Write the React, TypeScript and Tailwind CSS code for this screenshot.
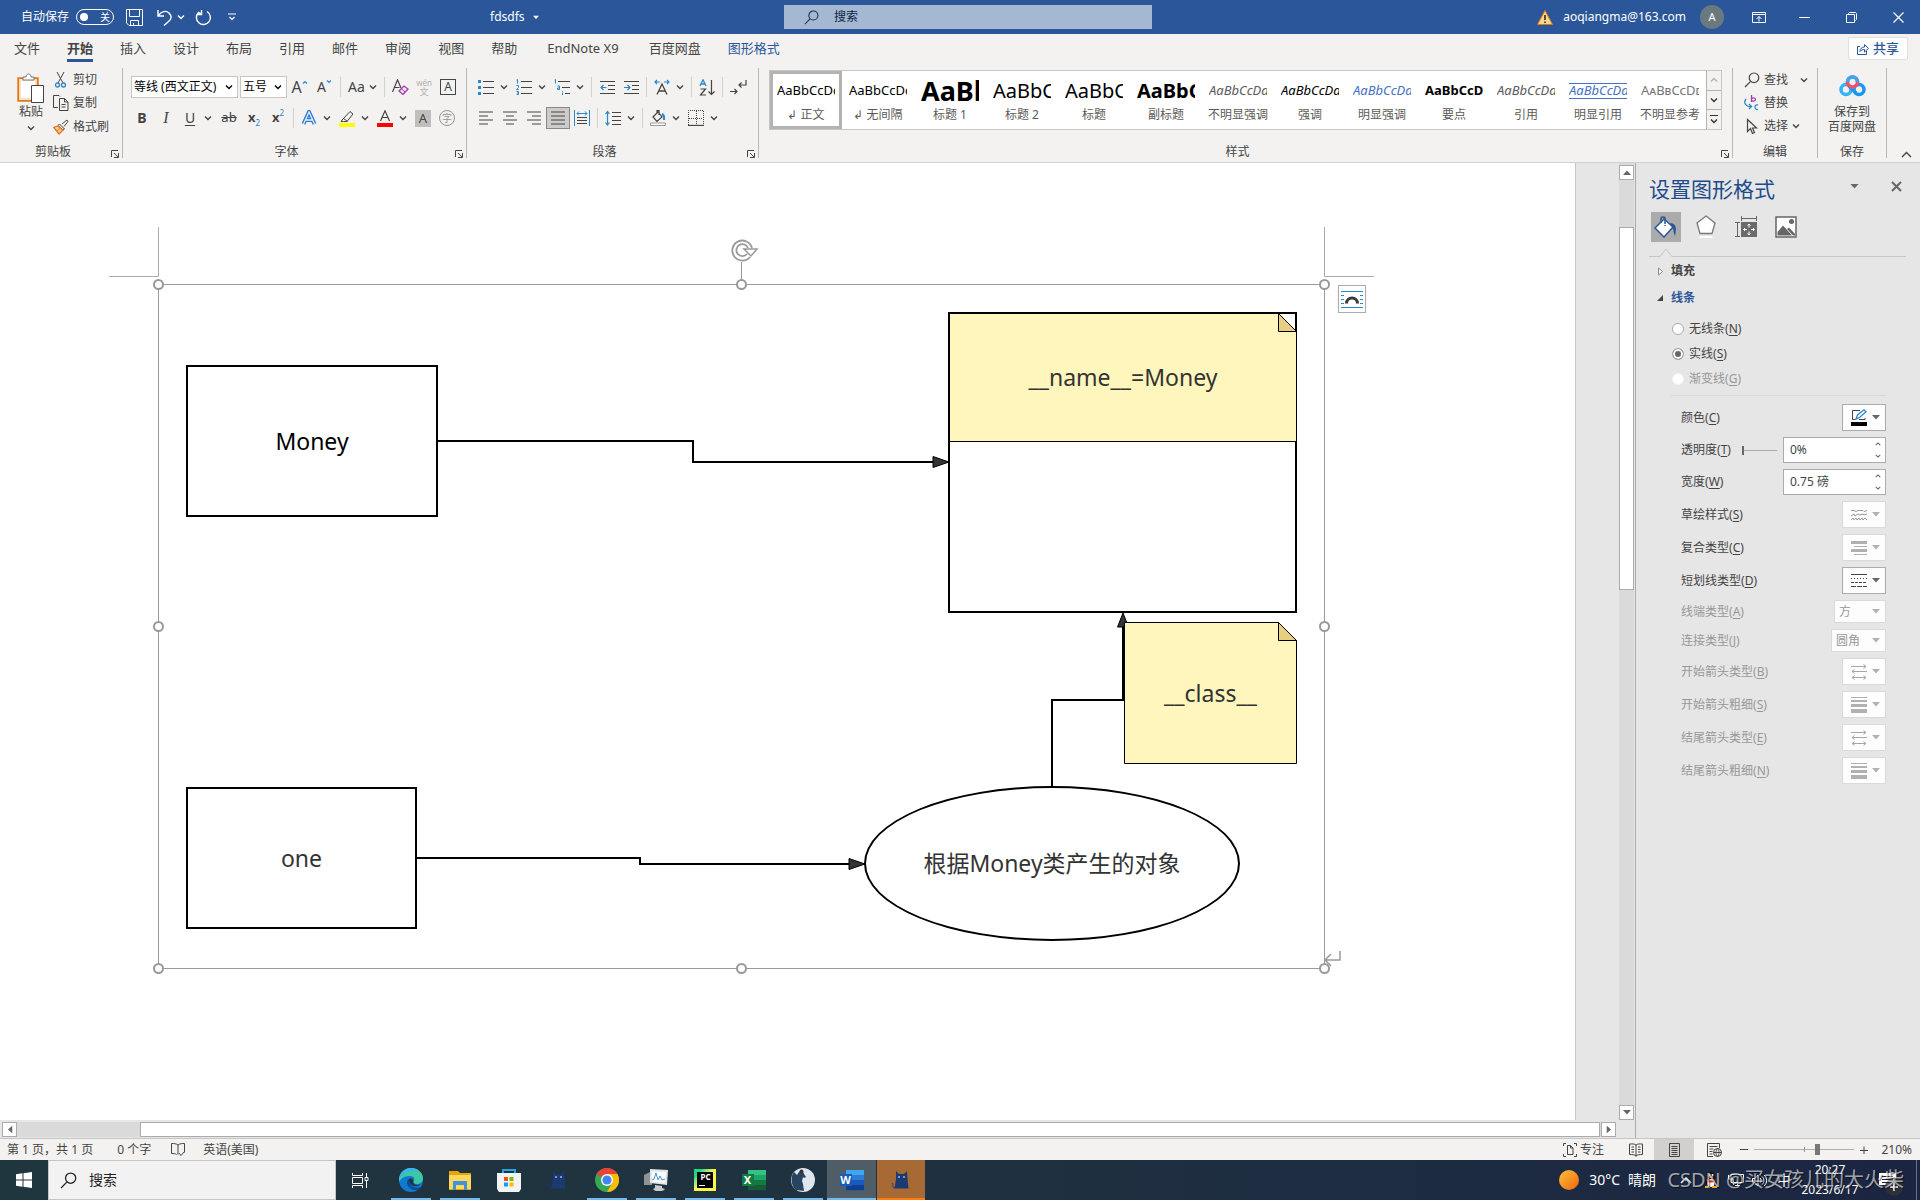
import React from 'react'

// --- Shared bits ---

function Chevron({ className = '' }: { className?: string }) {
  return (
    <svg width="8" height="6" viewBox="0 0 8 6" fill="none" stroke="currentColor" strokeWidth="1.4" className={`shrink-0 ${className}`}>
      <path d="M1 1.500 4 4.500 7 1.500" />
    </svg>
  )
}

function Caret({ className = '' }: { className?: string }) {
  return (
    <svg width="8" height="5" viewBox="0 0 8 5" className={`shrink-0 ${className}`}>
      <path d="M0 0h8L4 4.500z" fill="currentColor" />
    </svg>
  )
}

function Search({ size = 16, className = '' }: { size?: number; className?: string }) {
  return (
    <svg width={size} height={size} viewBox="0 0 16 16" fill="none" stroke="currentColor" strokeWidth="1.2" className={`shrink-0 ${className}`}>
      <circle cx="10" cy="5.800" r="4.800" />
      <path d="M6.600 9.300 1 15" />
    </svg>
  )
}

function Svg({ w = 16, h = 16, children }: { w?: number; h?: number; children: React.ReactNode }) {
  return (
    <svg width={w} height={h} viewBox={`0 0 ${w} ${h}`} fill="none" stroke="#444" strokeWidth="1" className="shrink-0">
      {children}
    </svg>
  )
}

// --- Title bar ---

function TitleBar() {
  return (
    <header className="flex h-[34px] shrink-0 items-center bg-[#2b579a] text-xs whitespace-nowrap text-white">
      <div className="flex w-[784px] items-center pl-[21px]">
        <label className="flex items-center gap-[7px]">
          自动保存
          <span className="flex h-4 w-[38px] items-center justify-between rounded-full border border-white px-[3px] text-[10px] leading-3">
            <input type="checkbox" className="size-2 appearance-none rounded-full bg-white" />
            关
          </span>
        </label>
        <button aria-label="保存" className="ml-3">
          <svg width="17" height="17" viewBox="0 0 17 17" fill="none" stroke="#fff">
            <path d="M.5.5h16v16H3l-2.500-2.500zM3.500.5v7h10v-7M4.500 16.500v-5h8v5M7.500 14v2.500" />
          </svg>
        </button>
        <button aria-label="撤消" className="ml-3.5 flex items-center gap-1">
          <svg width="16" height="17" viewBox="0 0 16 17" fill="none" stroke="#fff" strokeWidth="1.400">
            <path d="M1 1v6h6M1.500 6.500C4 2.500 9 1 12 4s3 6-1 9l-4 3.500" />
          </svg>
          <Chevron />
        </button>
        <button aria-label="重复" className="ml-2.5">
          <svg width="17" height="17" viewBox="0 0 17 17" fill="none" stroke="#fff" strokeWidth="1.400">
            <path d="M6.500 1v4.500H2M6 5 3.500 3.500a7 7 0 1 0 8.500-1" />
          </svg>
        </button>
        <button aria-label="自定义快速访问工具栏" className="ml-4">
          <svg width="8" height="8" viewBox="0 0 8 8" fill="none" stroke="#fff" strokeWidth="1.200">
            <path d="M0 1h8M1.500 4 4 6.500 6.500 4" />
          </svg>
        </button>
        <button className="ml-[254px] flex items-center gap-2">
          fdsdfs <Caret className="w-[6px]" />
        </button>
      </div>
      <label className="flex h-6 w-[368px] items-center gap-[15px] bg-[#a5b8d1] pl-5 text-[#17365d]">
        <Search size={15} />
        <input aria-label="搜索" placeholder="搜索" className="w-full bg-transparent outline-none placeholder:text-[#0b2545]" />
      </label>
      <div className="flex flex-1 items-center justify-end pr-4">
        <svg width="16" height="15" viewBox="0 0 16 15">
          <path d="M8 .5 15.500 14.500H.5z" fill="#ffd58a" stroke="#d9781d" />
          <path d="M8 5v5M8 11.500v1.500" stroke="#222" strokeWidth="1.500" />
        </svg>
        <span className="ml-2.5">aoqiangma@163.com</span>
        <span className="mr-7 ml-3.5 grid size-6 place-items-center rounded-full bg-[#69797e] text-[11px]">A</span>
        <button aria-label="功能区显示选项" className="mr-[33px]">
          <svg width="14" height="11" viewBox="0 0 14 11" fill="none" stroke="#fff">
            <path d="M.5.5h13v10H.5zM.5 2.500h13M7 9.500v-5M4.500 7 7 4.500 9.500 7" />
          </svg>
        </button>
        <button aria-label="最小化" className="mr-9 h-px w-[11px] bg-white" />
        <button aria-label="还原" className="mr-9">
          <svg width="11" height="11" viewBox="0 0 11 11" fill="none" stroke="#fff">
            <path d="M.5 2.500h8v8h-8zM2.500 2.500v-1l1-1h6l1 1v6l-1 1h-1" />
          </svg>
        </button>
        <button aria-label="关闭">
          <svg width="11" height="11" viewBox="0 0 11 11" stroke="#fff" strokeWidth="1.200">
            <path d="M.5.5l10 10M10.500.5l-10 10" />
          </svg>
        </button>
      </div>
    </header>
  )
}

// --- Tabs ---

const tabs = ['文件', '开始', '插入', '设计', '布局', '引用', '邮件', '审阅', '视图', '帮助', 'EndNote X9', '百度网盘', '图形格式']

function Tabs() {
  return (
    <nav className="flex h-[34px] shrink-0 items-start justify-between pr-3 pl-3.5 text-[13px] text-[#444]">
      <div className="flex gap-[27px]">
        {tabs.map((tab) => (
          <button
            key={tab}
            className={`h-7 border-b-3 pt-1 whitespace-nowrap ${tab === '开始' ? 'border-[#2b579a] font-bold' : 'border-transparent'} ${tab === '图形格式' ? 'text-[#2b579a]' : ''} ${tab === 'EndNote X9' ? 'px-[3px]' : ''}`}
          >
            {tab}
          </button>
        ))}
      </div>
      <button className="mt-[3px] flex h-[23px] w-[60px] items-center justify-center gap-1 rounded-xs border border-[#e1dfdd] bg-white font-medium text-[#2b579a]">
        <svg width="12" height="12" viewBox="0 0 12 12" fill="none" stroke="#2b579a">
          <path d="M3 3.500H.5v8h9V8M3 8.500c0-3 2-4.500 4.500-4.500V1.500l4 4-4 3.500V6.500C5.500 6.500 4 7 3 8.500z" />
        </svg>
        共享
      </button>
    </nav>
  )
}

// --- Ribbon ---

interface GroupProps {
  title: string
  launcher?: boolean
  className?: string
  children: React.ReactNode
}

function Group({ title, launcher, className = '', children }: GroupProps) {
  return (
    <section className={`relative flex h-[90px] flex-col justify-between border-r border-[#b9b7b5] ${className}`}>
      {children}
      <h2 className={`text-center text-xs leading-3 text-[#444] ${launcher ? 'pr-4' : ''}`}>{title}</h2>
      {launcher && (
        <button aria-label={`${title}选项`} className="absolute right-[3px] bottom-0">
          <Svg w={8} h={8}>
            <path d="M.5 7V.5H7M3 3l4 4M7.500 3v4.500H3" />
          </Svg>
        </button>
      )}
    </section>
  )
}

function Tool({ label, active, className = 'w-6', children }: { label: string; active?: boolean; className?: string; children: React.ReactNode }) {
  return (
    <button
      aria-label={label}
      className={`flex h-[22px] shrink-0 items-center justify-center ${active ? 'border border-[#8a8886] bg-[#cdcccb]' : ''} ${className}`}
    >
      {children}
    </button>
  )
}

function Split({ label, children }: { label: string; children: React.ReactNode }) {
  return (
    <button aria-label={label} className="flex h-[22px] w-[38px] shrink-0 items-center">
      <span className="flex w-6 justify-center">{children}</span>
      <span className="flex w-3 justify-center">
        <Chevron />
      </span>
    </button>
  )
}

function Sep() {
  return <div className="mx-[3px] h-5 w-px shrink-0 bg-[#d2d0ce]" />
}

function Combo({ label, value, className }: { label: string; value: string; className: string }) {
  return (
    <div className={`relative flex h-[22px] items-center border border-[#c8c6c4] bg-white text-black ${className}`}>
      <select aria-label={label} className="w-full appearance-none pl-0.5 text-xs outline-none">
        <option>{value}</option>
      </select>
      <Chevron className="pointer-events-none absolute right-1" />
    </div>
  )
}

function Clipboard() {
  return (
    <Group title="剪贴板" launcher className="w-[123px]">
      <div className="flex gap-2.5 pl-[17px] text-xs">
        <button className="flex w-7 shrink-0 flex-col items-center pt-[5px]">
          <svg width="28" height="30" viewBox="0 0 28 30" fill="none">
            <path d="M1.200 5.200h19.600v22.600H1.200z" fill="#fbe3bf" stroke="#e1791b" strokeWidth="1.800" />
            <path d="M4 8h14v17H4z" fill="#fff" />
            <path d="M6 7V4h3c0-4 5-4 5 0h3v3z" fill="#fff" stroke="#777" />
            <path d="M14.500 12.500h12v17h-12z" fill="#fff" stroke="#444" />
          </svg>
          <span className="leading-[18px]">粘贴</span>
          <Chevron className="mt-1" />
        </button>
        <div className="flex flex-col whitespace-nowrap">
          <button className="flex h-[23px] items-center gap-1.5">
            <Svg w={12} h={16}>
              <path d="M2 0l6 11M9 0 3 11" />
              <circle cx="2.500" cy="13" r="2" stroke="#2b88c8" strokeWidth="1.300" />
              <circle cx="8.500" cy="13" r="2" stroke="#2b88c8" strokeWidth="1.300" />
            </Svg>
            剪切
          </button>
          <button className="-ml-0.5 flex h-6 items-center gap-1">
            <Svg>
              <path d="M5 12.500H.5V.5h5.500l1 1M6.500 3.500h5l3.500 3.500v8.500H6.500zM11.500 3.500V7H15M8.500 9.500h4M8.500 12h4" />
            </Svg>
            复制
          </button>
          <button className="-ml-0.5 flex h-[23px] items-center gap-1">
            <Svg>
              <path d="M9 5l5-4 1 1.500-4 5M6.500 5l5 5-1.500 1L5 6.500z" />
              <path d="M5 7 .8 8.500 6 15l4-4z" fill="#f9c99b" stroke="#e1791b" strokeWidth="1.300" />
              <path d="M4 12l3-2.500" stroke="#e1791b" />
            </Svg>
            格式刷
          </button>
        </div>
      </div>
    </Group>
  )
}

function FontGroup() {
  return (
    <Group title="字体" launcher className="w-[344px]">
      <div className="flex flex-col gap-[9px] pt-2 text-[#444]">
        <div className="flex items-center pl-2">
          <Combo label="字体" value="等线 (西文正文)" className="w-[107px]" />
          <Combo label="字号" value="五号" className="ml-0.5 w-[47px]" />
          <Tool label="增大字号" className="w-[25px]">
            <span className="text-base">A</span>
            <svg width="6" height="4" viewBox="0 0 6 4" fill="none" stroke="#2b88c8" strokeWidth="1.200" className="mb-2.5"><path d="M1 3.500l2-2 2 2" /></svg>
          </Tool>
          <Tool label="减小字号" className="w-[25px]">
            <span className="text-sm">A</span>
            <svg width="6" height="4" viewBox="0 0 6 4" fill="none" stroke="#2b88c8" strokeWidth="1.200" className="mb-2.5"><path d="M1 .5l2 2 2-2" /></svg>
          </Tool>
          <Sep />
          <button aria-label="更改大小写" className="flex w-[37px] items-center justify-center gap-1 text-sm">
            Aa <Chevron />
          </button>
          <Sep />
          <Tool label="清除格式">
            <Svg w={17}>
              <path d="M.5 13 5.500.8 9 9M2.500 8.500h5" strokeWidth="1.200" />
              <path d="M7 12l5-5 4 3-5 5.500z" fill="#f4e3f7" stroke="#a33eb1" strokeWidth="1.300" />
              <path d="M9 9.500l4 3.500" stroke="#a33eb1" />
            </Svg>
          </Tool>
          <Tool label="拼音指南">
            <span className="flex flex-col items-center text-[#b1afad]">
              <span className="text-[8px] leading-[8px]">wén</span>
              <span className="text-[9px] leading-[9px]">文</span>
            </span>
          </Tool>
          <Tool label="字符边框">
            <span className="grid size-4 place-items-center border border-[#444] text-xs leading-3">A</span>
          </Tool>
        </div>
        <div className="flex items-center pl-[7px]">
          <Tool label="加粗"><b className="text-sm">B</b></Tool>
          <Tool label="倾斜"><i className="font-['Liberation_Serif'] text-base">I</i></Tool>
          <Split label="下划线"><span className="text-sm underline underline-offset-2">U</span></Split>
          <Tool label="删除线" className="w-[26px]"><s className="text-[13px]">ab</s></Tool>
          <Tool label="下标"><b className="text-[13px]">x</b><span className="mt-2.5 text-[8px] text-[#2b88c8]">2</span></Tool>
          <Tool label="上标"><b className="text-[13px]">x</b><span className="mb-2.5 text-[8px] text-[#2b88c8]">2</span></Tool>
          <Sep />
          <Split label="文本效果">
            <Svg>
              <path d="M2.500 14 8 2l5.500 12M4.500 10h7" stroke="#2b7cd3" strokeWidth="4" />
              <path d="M2.500 14 8 2l5.500 12M4.500 10h7" stroke="#e6f1fb" strokeWidth="1.300" />
            </Svg>
          </Split>
          <Split label="突出显示">
            <Svg h={17}>
              <path d="M4 9 11 1.500l3 2.500-6 7.500H4.500L2 11.500z" />
              <path d="M4.500 8.500l4 3" />
              <path d="M0 13h16v4H0z" fill="#ff0" stroke="none" />
            </Svg>
          </Split>
          <Split label="字体颜色">
            <Svg h={17}>
              <path d="M3.500 11 8 .8l4.500 10.200M5 7.500h6" strokeWidth="1.200" />
              <path d="M0 13h16v4H0z" fill="#f00" stroke="none" />
            </Svg>
          </Split>
          <Tool label="字符底纹">
            <span className="grid h-[17px] w-4 place-items-center bg-[#c1bfbd] text-[13px] leading-4">A</span>
          </Tool>
          <Tool label="带圈字符">
            <span className="grid size-4 place-items-center rounded-full border border-[#979593] text-[10px] leading-3 text-[#979593]">字</span>
          </Tool>
        </div>
      </div>
    </Group>
  )
}

function ParagraphGroup() {
  return (
    <Group title="段落" launcher className="w-[292px]">
      <div className="flex flex-col gap-[9px] pt-2 pl-[7px] text-[#444]">
        <div className="flex items-center">
          <Split label="项目符号">
            <Svg>
              <path d="M5 2.500h11M5 8.500h11M5 14.500h11" strokeWidth="1.200" />
              <path d="M0 1h3v3H0zM0 7h3v3H0zM0 13h3v3H0z" fill="#2b88c8" stroke="none" />
            </Svg>
          </Split>
          <Split label="编号">
            <Svg>
              <path d="M5 2.500h11M5 8.500h11M5 14.500h11" strokeWidth="1.200" />
              <path d="M.5 1l1-.5v4M.5 6.500h2v2l-2 2h2M.5 12.500h2v3h-2M1 14h1.500" stroke="#2b88c8" />
            </Svg>
          </Split>
          <Split label="多级列表">
            <Svg>
              <path d="M4 2.500h12M8 8.500h8M11 14.500h5" strokeWidth="1.200" />
              <path d="M.5 1l1-.5v4M3.500 7h2v3.500h-2V9h2M8.500 12v.8M8.500 13.500V16" stroke="#2b88c8" />
            </Svg>
          </Split>
          <Sep />
          <Tool label="减少缩进">
            <Svg w={15} h={14}>
              <path d="M0 1.500h15M8 5.500h7M8 9.500h7M0 13.500h15" />
              <path d="M6.500 7.500H1M3.500 5 1 7.500 3.500 10" stroke="#2b88c8" strokeWidth="1.200" />
            </Svg>
          </Tool>
          <Tool label="增加缩进">
            <Svg w={15} h={14}>
              <path d="M0 1.500h15M8 5.500h7M8 9.500h7M0 13.500h15" />
              <path d="M0 7.500h6M3.500 5 6 7.500 3.500 10" stroke="#2b88c8" strokeWidth="1.200" />
            </Svg>
          </Tool>
          <Sep />
          <Split label="中文版式">
            <Svg>
              <path d="M3 15.500 8 5l5 10.500M5 12h6" strokeWidth="1.300" />
              <path d="M1 3h5M3 1 1 3l2 2M10 3h5M13 1l2 2-2 2" stroke="#2b88c8" strokeWidth="1.200" />
            </Svg>
          </Split>
          <Sep />
          <Tool label="排序">
            <Svg w={17} h={17}>
              <path d="M1 7 4 .8 7 7M2 5h4" stroke="#2b88c8" strokeWidth="1.300" />
              <path d="M1.500 10h5l-5 6h5.500M12.500 1v15M9.500 12.500l3 3 3-3" strokeWidth="1.200" />
            </Svg>
          </Tool>
          <Sep />
          <Tool label="显示编辑标记">
            <Svg w={17}>
              <path d="M16 1v5H9M11.500 3.500 9 6l2.500 2.500M0 12.500h7M4.500 10 7 12.500 4.500 15" strokeWidth="1.200" />
            </Svg>
          </Tool>
        </div>
        <div className="flex items-center">
          <Tool label="左对齐"><Svg w={14} h={14}><path d="M0 1h14M0 5h9M0 9h14M0 13h9" strokeWidth="1.200" /></Svg></Tool>
          <Tool label="居中"><Svg w={14} h={14}><path d="M0 1h14M3 5h8M0 9h14M3 13h8" strokeWidth="1.200" /></Svg></Tool>
          <Tool label="右对齐"><Svg w={14} h={14}><path d="M0 1h14M5 5h9M0 9h14M5 13h9" strokeWidth="1.200" /></Svg></Tool>
          <Tool label="两端对齐" active><Svg w={14} h={14}><path d="M0 1h14M0 5h14M0 9h14M0 13h14" strokeWidth="1.200" /></Svg></Tool>
          <Tool label="分散对齐">
            <Svg>
              <path d="M3 7.500h10M3 10.500h10M3 13.500h10" />
              <path d="M.5 0v16M15.500 0v16M3 3.500h10M5 1.500l-2 2 2 2M11 1.500l2 2-2 2" stroke="#2b88c8" />
            </Svg>
          </Tool>
          <Sep />
          <Split label="行距">
            <Svg>
              <path d="M7 2.500h9M7 6.500h9M7 10.500h9M7 14.500h9" />
              <path d="M2.500 1.500v14M.5 4l2-2.500 2 2.500M.5 12.500l2 2.500 2-2.500" stroke="#2b88c8" strokeWidth="1.200" />
            </Svg>
          </Split>
          <Sep />
          <Split label="底纹">
            <Svg>
              <path d="M3 7l5-5 4 5-5 4.500zM7 4V.5h2V5" strokeWidth="1.200" />
              <path d="M12 4c3 1 2 4 2 6" stroke="#2b88c8" strokeWidth="2" />
              <path d="M.5 13h15v2.500H.5z" fill="#fff" stroke="#999" />
            </Svg>
          </Split>
          <Split label="边框">
            <Svg>
              <path d="M.5 15V.5h15V15M8.500 1v14M1 8.500h14" strokeDasharray="1 1" />
              <path d="M0 15.500h16" strokeWidth="1.300" />
            </Svg>
          </Split>
        </div>
      </div>
    </Group>
  )
}

const styles = [
  { name: '↲ 正文', sample: 'AaBbCcDd', look: 'text-[13px] text-black' },
  { name: '↲ 无间隔', sample: 'AaBbCcDd', look: 'text-[13px] text-black' },
  { name: '标题 1', sample: 'AaBb', look: 'text-[27px] font-bold text-black' },
  { name: '标题 2', sample: 'AaBbC', look: 'text-xl text-black' },
  { name: '标题', sample: 'AaBbC', look: 'text-xl text-black' },
  { name: '副标题', sample: 'AaBbC', look: 'text-xl font-bold text-black' },
  { name: '不明显强调', sample: 'AaBbCcDd', look: 'text-[13px] italic text-[#5a5a5a]' },
  { name: '强调', sample: 'AaBbCcDd', look: 'text-[13px] italic text-black' },
  { name: '明显强调', sample: 'AaBbCcDd', look: 'text-[13px] italic text-[#4472c4]' },
  { name: '要点', sample: 'AaBbCcDd', look: 'text-[13px] font-bold text-black' },
  { name: '引用', sample: 'AaBbCcDd', look: 'text-[13px] italic text-[#5a5a5a]' },
  { name: '明显引用', sample: 'AaBbCcDd', look: 'text-[13px] italic text-[#4472c4] border-y border-[#4472c4]' },
  { name: '不明显参考', sample: 'AaBbCcDd', look: 'text-[13px] text-[#767676] [font-variant:small-caps]' },
]

function StylesGroup() {
  return (
    <Group title="样式" launcher className="min-w-0 flex-1 px-2.5 pt-0.5">
      <div className="flex h-[60px] justify-between border border-[#c8c6c4] bg-white">
        <div className="flex min-w-0 overflow-hidden">
          {styles.map((style, i) => (
            <button
              key={style.name}
              className={`flex w-[72px] shrink-0 flex-col items-center justify-between ${i === 0 ? 'border-3 border-[#b5b3b1] pt-[9px] pb-[3px]' : 'pt-3 pb-1.5'}`}
            >
              <span className={`flex h-4 w-[58px] items-center whitespace-nowrap [clip-path:inset(-8px_0)] ${style.look}`}>
                {style.sample}
              </span>
              <span className="text-xs leading-4 whitespace-nowrap text-[#5c5a58]">{style.name}</span>
            </button>
          ))}
        </div>
        <div className="flex w-[15px] shrink-0 flex-col divide-y divide-[#b5b3b1] border-l border-[#b5b3b1] bg-[#f3f2f1] text-[#333]">
          <button aria-label="上一行" className="grid flex-1 place-items-center text-[#b5b3b1]"><Chevron className="rotate-180" /></button>
          <button aria-label="下一行" className="grid flex-1 place-items-center"><Chevron /></button>
          <button aria-label="其他" className="flex flex-1 flex-col items-center justify-center gap-0.5">
            <span className="h-px w-2 bg-[#333]" />
            <Chevron />
          </button>
        </div>
      </div>
    </Group>
  )
}

function Ribbon() {
  return (
    <div className="flex h-[95px] shrink-0 border-b border-[#d2d0ce] text-[#444]">
      <Clipboard />
      <FontGroup />
      <ParagraphGroup />
      <StylesGroup />
      <Group title="编辑" className="w-[85px]">
        <div className="flex flex-col pl-[11px] text-xs">
          <button className="flex h-[23px] items-center gap-1">
            <Search /> 查找 <Chevron className="ml-2" />
          </button>
          <button className="flex h-[23px] items-center gap-1">
            <Svg>
              <path d="M7.500 0v7M7.500 4c0-1.500 4-1.500 4 .5s-4 2-4 .5" stroke="#a33eb1" strokeWidth="1.300" />
              <path d="M14 10c-4-1-4 5 0 4.500M2 4c-3 4 0 8 5 7.500M5 9l2.500 2.500L5 14" stroke="#2b88c8" strokeWidth="1.300" />
            </Svg>
            替换
          </button>
          <button className="flex h-[23px] items-center gap-1">
            <Svg>
              <path d="M3.500 1.500v12l3-3 2 5 2-1-2-4.500h4z" strokeWidth="1.200" />
            </Svg>
            选择 <Chevron />
          </button>
        </div>
      </Group>
      <Group title="保存" className="w-[69px]">
        <button className="flex flex-col items-center pt-[7px] text-xs leading-[15px]">
          <svg width="27" height="22" viewBox="0 0 27 22" fill="none" strokeWidth="3.600">
            <circle cx="7" cy="14.500" r="5" stroke="#35b4f8" />
            <circle cx="20" cy="14.500" r="5" stroke="#1a98f3" />
            <path d="M10 11l7 7" stroke="#1a98f3" />
            <circle cx="13.500" cy="7" r="5" stroke="#f0506e" />
            <path d="M8.500 7a5 5 0 0 1 10 0" stroke="#35a8f5" />
          </svg>
          <span className="mt-[7px]">保存到<br />百度网盘</span>
        </button>
      </Group>
      <button aria-label="折叠功能区" className="flex w-[33px] items-end justify-end pr-2 pb-1">
        <svg width="11" height="7" viewBox="0 0 11 7" fill="none" stroke="#444" strokeWidth="1.400"><path d="M1 6l4.500-4.500L10 6" /></svg>
      </button>
    </div>
  )
}

// --- Drawing canvas ---

function Node({ className, children }: { className: string; children?: React.ReactNode }) {
  return <div className={`absolute flex items-center justify-center ${className}`}>{children}</div>
}

function Note({ w, h, className, children }: { w: number; h: number; className: string; children: React.ReactNode }) {
  return (
    <div className={`absolute flex items-center justify-center ${className}`}>
      <svg width={w} height={h} className="absolute inset-0" stroke="#000">
        <path d={`M.5.5H${w - 18.5}L${w - 0.5} 18.500V${h - 0.5}H.5z`} fill="#fff6bd" />
        <path d={`M${w - 18.5}.5V18.500H${w - 0.5}z`} fill="#e6cf82" />
      </svg>
      <span className="relative">{children}</span>
    </div>
  )
}

const handles = [
  [0, 0], [583, 0], [1166, 0], [0, 342], [1166, 342], [0, 684], [583, 684], [1166, 684],
]

function Canvas() {
  return (
    <div className="absolute top-[121px] left-[158px] h-[684px] w-[1166px] text-[23px] text-[#333]">
      <svg width="1166" height="684" className="absolute inset-0 overflow-visible" fill="none" stroke="#ababab">
        <path d="M.5-57V-7.500H-49M1166.500-57V-7.500H1216" />
        <path d="M.5.5h1166v684H.5zM583.500-22V0" stroke="#999" />
        <path d="M279 157H535V178H780M894 503V416H965V340M259 574H482V580H700" stroke="#000" strokeWidth="2" />
        <path d="M775 172.500 791 178 775 183.500zM959.500 343 965 329 970.500 343zM691 574.500 707 580 691 585.500z" fill="#333" stroke="#000" />
      </svg>

      <Node className="top-[81px] left-[28px] h-[152px] w-[252px] border-2 border-black text-black">Money</Node>
      <Node className="top-[503px] left-[28px] h-[142px] w-[231px] border-2 border-black">one</Node>
      <Node className="top-[28px] left-[790px] h-[301px] w-[349px] border-2 border-black" />
      <Node className="top-[502px] left-[706px] h-[155px] w-[376px] rounded-[50%] border-2 border-black">根据Money类产生的对象</Node>
      <Note w={348} h={129} className="top-[29px] left-[791px] h-[129px] w-[348px]">__name__=Money</Note>
      <Note w={173} h={142} className="top-[338px] left-[966px] h-[142px] w-[173px]">__class__</Note>

      <svg width="1166" height="684" className="pointer-events-none absolute inset-0 overflow-visible" fill="none" stroke="#999" strokeWidth="2">
        {handles.map(([x, y]) => (
          <circle key={`${x}-${y}`} cx={x + 0.5} cy={y + 0.5} r="4.500" fill="#fff" />
        ))}
        <path d="M592-27a10 10 0 1 1 2-9M589-30a6 6 0 1 1 1-6" strokeWidth="1.800" />
        <path d="M586-35h13l-6 7z" fill="#fff" strokeWidth="1.500" />
        <path d="M1182 667v9h-14M1173 670l-6 6 6 6" strokeWidth="1.500" />
      </svg>

      <button aria-label="布局选项" className="absolute top-px left-[1180px] grid size-7 place-items-center border border-[#ababab] bg-white">
        <svg width="22" height="18" viewBox="0 0 22 18" fill="none" stroke="#2b88c8">
          <path d="M0 1.500h22M0 5.500h3M19 5.500h3M0 9.500h3M19 9.500h3M0 13.500h3M19 13.500h3M0 17.500h22" />
          <path d="M5.500 13.500a5.500 5.500 0 0 1 11 0" stroke="#3b3a39" strokeWidth="3" />
        </svg>
      </button>
    </div>
  )
}

function Workspace() {
  return (
    <main className="flex min-w-0 flex-1 flex-col">
      <div className="flex min-h-0 flex-1">
        <div className="relative min-w-0 flex-1 overflow-hidden border-r border-[#c6c6c6] bg-white">
          <Canvas />
        </div>
        <div className="w-[43px] bg-[#e6e6e6]" />
        <div className="flex w-[15px] flex-col bg-[#dadada] pt-0.5 text-[#666]">
          <button aria-label="向上滚动" className="grid h-[15px] place-items-center border border-[#ababab] bg-white"><Caret className="rotate-180" /></button>
          <div className="mt-[47px] h-[363px] border border-[#ababab] bg-white" />
          <button aria-label="向下滚动" className="mt-auto grid h-[15px] place-items-center border border-[#ababab] bg-white"><Caret /></button>
        </div>
        <div className="w-px bg-[#e6e6e6]" />
      </div>
      <div className="flex h-[18px] shrink-0 items-center bg-[#e6e6e6] pr-[19px] pl-0.5 text-[#666]">
        <button aria-label="向左滚动" className="grid size-[15px] place-items-center border border-[#ababab] bg-white"><Caret className="rotate-90" /></button>
        <div className="flex h-[15px] flex-1 bg-[#dadada] pl-[123px]">
          <div className="mr-px flex-1 border border-[#ababab] bg-white" />
        </div>
        <button aria-label="向右滚动" className="grid size-[15px] place-items-center border border-[#ababab] bg-white"><Caret className="-rotate-90" /></button>
      </div>
    </main>
  )
}

// --- Format pane ---

function KeyLabel({ text, hotkey }: { text: string; hotkey: string }) {
  return (
    <span>
      {text}(<span className="underline underline-offset-2">{hotkey}</span>)
    </span>
  )
}

const lineKinds = [
  { text: '无线条', hotkey: 'N' },
  { text: '实线', hotkey: 'S', checked: true },
  { text: '渐变线', hotkey: 'G', disabled: true },
]

const icons = {
  color: (
    <Svg h={17}>
      <path d="M9 1.500H1.500v9H4M14 9v1.500H8" />
      <path d="M5 10l1.500-4L13 .8l2 2L8.500 8.500z" stroke="#2b88c8" strokeWidth="1.300" />
      <path d="M0 13h16v4H0z" fill="#000" stroke="none" />
    </Svg>
  ),
  sketch: (
    <Svg h={12}>
      <path d="M0 1.500h3l2 1 2-1h5l1 1 3-1M0 7l3-2 1 2 3-2 2 1 3-1 1 1 3-1M0 11l2-2 1 2 2-2 1 2 2-2 1 2 2-2 1 2 2-2 2 2" stroke="#999" />
    </Svg>
  ),
  compound: (
    <Svg h={14}>
      <path d="M0 1.500h16M0 9.500h16" stroke="#b1b1b1" strokeWidth="3" />
      <path d="M3 5.500h13M3 13.500h13" stroke="#b1b1b1" />
    </Svg>
  ),
  dash: (
    <Svg h={14}>
      <path d="M0 .5h16" />
      <path d="M0 4.500h16" strokeDasharray="1 2" />
      <path d="M0 8.500h16" strokeDasharray="3 1" />
      <path d="M0 12.500h16" strokeDasharray="5 1" />
    </Svg>
  ),
  arrow: (
    <Svg>
      <path d="M0 2.500h15M12.500.5l2.500 2-2.500 2M16 7.500H1M3.500 5.500 1 7.500l2.500 2M1 13.500h14M3.500 11.500l-2.500 2 2.500 2M12.500 11.500l2.500 2-2.500 2" stroke="#a6a6a6" />
    </Svg>
  ),
  weight: (
    <Svg>
      <path d="M0 .5h16" stroke="#b1b1b1" />
      <path d="M0 4h16" stroke="#b1b1b1" strokeWidth="2" />
      <path d="M0 8.500h16" stroke="#b1b1b1" strokeWidth="3" />
      <path d="M0 14h16" stroke="#b1b1b1" strokeWidth="4" />
    </Svg>
  ),
}

interface Row {
  id: string
  text: string
  hotkey: string
  icon?: keyof typeof icons
  input?: string
  select?: string
  dim?: boolean
  off?: boolean
}

const rows: Row[] = [
  { id: 'color', text: '颜色', hotkey: 'C', icon: 'color' },
  { id: 'alpha', text: '透明度', hotkey: 'T', input: '0%' },
  { id: 'width', text: '宽度', hotkey: 'W', input: '0.75 磅' },
  { id: 'sketch', text: '草绘样式', hotkey: 'S', icon: 'sketch', off: true },
  { id: 'compound', text: '复合类型', hotkey: 'C', icon: 'compound', off: true },
  { id: 'dash', text: '短划线类型', hotkey: 'D', icon: 'dash' },
  { id: 'cap', text: '线端类型', hotkey: 'A', select: '方', dim: true },
  { id: 'join', text: '连接类型', hotkey: 'J', select: '圆角', dim: true },
  { id: 'start-type', text: '开始箭头类型', hotkey: 'B', icon: 'arrow', dim: true, off: true },
  { id: 'start-size', text: '开始箭头粗细', hotkey: 'S', icon: 'weight', dim: true, off: true },
  { id: 'end-type', text: '结尾箭头类型', hotkey: 'E', icon: 'arrow', dim: true, off: true },
  { id: 'end-size', text: '结尾箭头粗细', hotkey: 'N', icon: 'weight', dim: true, off: true },
]

function FormatRow({ row }: { row: Row }) {
  return (
    <div className={`flex items-center ${row.dim ? 'text-[#989898]' : ''}`}>
      <label htmlFor={row.id} className="mr-auto whitespace-nowrap">
        <KeyLabel text={row.text} hotkey={row.hotkey} />
      </label>
      {row.id === 'alpha' && (
        <div className="relative mr-1.5 flex h-3 w-[35px] items-center">
          <div className="absolute h-px w-full bg-[#ababab]" />
          <input
            type="range"
            aria-label="透明度"
            defaultValue={0}
            className="relative w-full appearance-none bg-transparent [&::-webkit-slider-thumb]:h-[9px] [&::-webkit-slider-thumb]:w-0.5 [&::-webkit-slider-thumb]:appearance-none [&::-webkit-slider-thumb]:bg-[#666]"
          />
        </div>
      )}
      {row.input && (
        <div className="flex h-[26px] w-[103px] border border-[#ababab] bg-white pl-1.5">
          <input id={row.id} defaultValue={row.input} className="w-full min-w-0 outline-none" />
          <div className="flex w-4 flex-col items-center justify-around text-[#666]">
            <button aria-label="增加"><Chevron className="w-1.5 rotate-180" /></button>
            <button aria-label="减少"><Chevron className="w-1.5" /></button>
          </div>
        </div>
      )}
      {row.select && (
        <div className={`relative flex h-[23px] items-center border border-[#dadada] bg-[#fdfdfd] pl-1 ${row.id === 'cap' ? 'w-[52px]' : 'w-[55px]'}`}>
          <select id={row.id} disabled className="w-full appearance-none outline-none">
            <option>{row.select}</option>
          </select>
          <Caret className="pointer-events-none absolute right-[5px] text-[#b1b1b1]" />
        </div>
      )}
      {row.icon && (
        <button
          id={row.id}
          disabled={row.off}
          className={`flex h-[27px] w-11 items-center justify-between border pr-[5px] pl-2 ${row.off ? 'border-[#dadada] bg-[#fdfdfd] text-[#b1b1b1]' : 'border-[#ababab] bg-[#fdfdfd] text-[#666]'}`}
        >
          {icons[row.icon]}
          <Caret />
        </button>
      )}
    </div>
  )
}

function FormatPane() {
  return (
    <aside className="flex w-[285px] shrink-0 flex-col border-l border-[#ababab] bg-[#e6e6e6] pr-3.5 pl-[13px] text-xs text-[#444]">
      <div className="flex items-center pt-2.5">
        <h1 className="mr-auto text-[21px] leading-8 text-[#1e4b8c]">设置图形格式</h1>
        <button aria-label="任务窗格选项" className="mr-8 mb-1.5 text-[#666]"><Caret className="w-[9px]" /></button>
        <button aria-label="关闭窗格" className="mr-1 mb-1.5">
          <svg width="11" height="11" viewBox="0 0 11 11" stroke="#666" strokeWidth="2"><path d="M1 1l9 9M10 1l-9 9" /></svg>
        </button>
      </div>
      <div className="flex items-center gap-2.5 pt-[7px] pl-0.5">
        <button aria-label="填充与线条" className="grid size-[30px] place-items-center bg-[#ababab]">
          <svg width="24" height="22" viewBox="0 0 24 22" fill="none" stroke="#2b579a" strokeWidth="1.500">
            <path d="M1 12 10 3l9 8-9 10z" fill="#fff" />
            <path d="M7 7V2.500c0-2 4-2 4 0V8M11 9v1" />
            <path d="M16 7c6 0 7 5 5 13-2-4-1-7-3-9z" fill="#2b579a" stroke="none" />
          </svg>
        </button>
        <button aria-label="效果" className="grid size-[30px] place-items-center">
          <svg width="20" height="24" viewBox="0 0 20 24">
            <path d="M10 1 19 8l-3 10.500H4L1 8z" fill="#fff" stroke="#777" strokeWidth="1.300" />
            <path d="M4 21h12l1 2H3z" fill="#fff" />
          </svg>
        </button>
        <button aria-label="布局属性" className="grid size-[30px] place-items-center">
          <svg width="22" height="22" viewBox="0 0 22 22" fill="none" stroke="#666">
            <path d="M7 2.500h14M6.500 0v5M21.500 0v5M2.500 7v14M0 6.500h5M0 20.500h5" />
            <path d="M6 6h16v15H6z" fill="#6b6b6b" stroke="none" />
            <path d="M14 8v3.500M14 15.500V19M8.500 13.500H12M16 13.500h3.500M12.500 9.500 14 8l1.500 1.500M12.500 17.500 14 19l1.500-1.500M10 12l-1.500 1.500L10 15M18 12l1.500 1.500L18 15" stroke="#fff" />
          </svg>
        </button>
        <button aria-label="图片" className="grid size-[30px] place-items-center">
          <svg width="22" height="22" viewBox="0 0 22 22">
            <path d="M1 1h20v20H1z" fill="#fff" stroke="#666" strokeWidth="1.500" />
            <circle cx="16.500" cy="5.500" r="2.500" fill="#666" />
            <path d="M2.500 16 8 9.500l9 10H2.500zM12 13l2-1.500 6 6.500v1.500h-2z" fill="#666" />
          </svg>
        </button>
      </div>
      <div className="relative mt-3.5 border-t border-[#c6c6c6]">
        <svg width="14" height="9" viewBox="0 0 14 9" className="absolute -top-[9px] left-2.5" fill="#e6e6e6" stroke="#c6c6c6"><path d="M.5 9 7 1l6.500 8" /></svg>
      </div>
      <button className="mt-0.5 flex h-6 items-center gap-2 pl-[9px] font-bold">
        <svg width="5" height="9" viewBox="0 0 5 9" fill="#fff" stroke="#888"><path d="M.5 1v7L4.500 4.500z" /></svg>
        填充
      </button>
      <button className="mt-[3px] flex h-6 items-center gap-2 pl-2 font-bold text-[#2b579a]">
        <svg width="6" height="6" viewBox="0 0 6 6" fill="#444"><path d="M6 0v6H0z" /></svg>
        线条
      </button>
      <fieldset className="mt-1.5 flex flex-col pl-[23px]">
        {lineKinds.map((kind) => (
          <label key={kind.text} className={`flex h-[25px] items-center gap-[5px] ${kind.disabled ? 'text-[#989898]' : ''}`}>
            <input
              type="radio"
              name="line"
              defaultChecked={kind.checked}
              disabled={kind.disabled}
              className="size-3 appearance-none rounded-full border border-[#ababab] bg-white checked:bg-[#666] checked:shadow-[inset_0_0_0_2px_#fff] disabled:border-[#f5f5f5]"
            />
            <KeyLabel text={kind.text} hotkey={kind.hotkey} />
          </label>
        ))}
      </fieldset>
      <div className="mt-1 mr-5 ml-[22px] border-t border-[#dadada]" />
      <div className="mt-2 mr-5 flex flex-col gap-1.5 pl-8">
        {rows.map((row) => (
          <FormatRow key={row.id} row={row} />
        ))}
      </div>
    </aside>
  )
}

// --- Status bar ---

function StatusBar() {
  return (
    <footer className="flex h-[22px] shrink-0 items-center border-t border-[#c6c6c6] bg-[#f3f2f1] pr-2 pl-[7px] text-xs text-[#444]">
      <span>第 1 页，共 1 页</span>
      <span className="ml-6">0 个字</span>
      <button aria-label="校对" className="ml-5">
        <Svg w={14} h={13}><path d="M7 2v9.500M7 2C5 .5 3 .5.5.5v10c2 0 4 0 5 1M7 2C9 .5 11 .5 13.500.5v9M8 10l2 2.500 3.500-4" /></Svg>
      </button>
      <span className="ml-[18px]">英语(美国)</span>
      <button className="ml-auto flex items-center gap-[3px]">
        <Svg w={14} h={14}><path d="M.5 3V.5H3M11 .5h2.500V3M.5 11v2.500H3M11 13.500h2.500V11M4.500 2.500h3l2.500 2.500v6.500H4.500zM7.500 2.500V5H10" /></Svg>
        专注
      </button>
      <button aria-label="阅读视图" className="ml-[14px] grid h-[21px] w-9 place-items-center">
        <Svg w={14} h={14}><path d="M7 2v11.500M7 2C5 .5 3 1 .5 1v10.500c2.500 0 5 0 6.500 1.500M7 2c2-1.500 4-1 6.500-1v10.500c-2.500 0-5 0-6.500 1.500M2.500 4H5M2.500 6.500H5M2.500 9H5M9 4h2.500M9 6.500h2.500M9 9h2.500" /></Svg>
      </button>
      <button aria-label="页面视图" className="grid h-[21px] w-10 place-items-center bg-[#d2d0ce]">
        <Svg w={11} h={14}><path d="M.5.5h10v13H.5zM2.500 3.500h6M2.500 5.500h6M2.500 7.500h6M2.500 9.500h6M2.500 11.500h6" /></Svg>
      </button>
      <button aria-label="Web 版式视图" className="grid h-[21px] w-10 place-items-center">
        <Svg w={15} h={14}>
          <path d="M6 13.500H.5V.5h12V5M2.500 3.500h8M2.500 6h4M2.500 8.500h3M2.500 11h3" />
          <circle cx="10.500" cy="9.500" r="4" />
          <path d="M6.500 9.500h8M10.500 5.500c-2 2-2 6 0 8 2-2 2-6 0-8" />
        </Svg>
      </button>
      <button aria-label="缩小" className="ml-1.5 h-px w-2 bg-[#444]" />
      <div className="relative mx-1.5 flex h-3 w-[100px] items-center justify-center">
        <div className="absolute h-px w-full bg-[#b1afad]" />
        <div className="absolute h-[5px] w-px bg-[#979593]" />
        <input
          type="range"
          aria-label="显示比例"
          defaultValue={64}
          className="relative w-full appearance-none bg-transparent [&::-webkit-slider-thumb]:h-[11px] [&::-webkit-slider-thumb]:w-[5px] [&::-webkit-slider-thumb]:appearance-none [&::-webkit-slider-thumb]:bg-[#777]"
        />
      </div>
      <button aria-label="放大"><Svg w={8} h={8}><path d="M0 4.500h8M4 .5v8" /></Svg></button>
      <span className="ml-3 w-8 text-right">210%</span>
    </footer>
  )
}

// --- Taskbar ---

function Cat({ className = '' }: { className?: string }) {
  return (
    <svg width="18" height="18" viewBox="0 0 18 18" className={className}>
      <path d="M4 0l3 3h5l3-3 .5 8 1 9.500h-14L4 8z" fill="#1c3a72" />
      <path d="M3 17c-3 0-2-3-2.500-5" stroke="#1c3a72" fill="none" />
      <path d="M6 6h2M11 6h2" stroke="#9bb8e8" strokeWidth="1.300" />
    </svg>
  )
}

function OfficeIcon({ letter, shades, front }: { letter: string; shades: string[]; front: string }) {
  return (
    <span className="relative flex h-6 w-6 items-center">
      <svg width="24" height="24" viewBox="0 0 24 24" className="absolute inset-0">
        {shades.map((shade, i) => (
          <path key={shade} d={`M6 ${2 + i * 5}h18v5.200H6z`} fill={shade} />
        ))}
        <path d="M0 6h12v12H0z" fill={front} />
      </svg>
      <span className="relative w-3 text-center text-[11px] font-bold text-white">{letter}</span>
    </span>
  )
}

const apps = [
  {
    name: 'Edge',
    run: true,
    icon: (
      <svg width="24" height="24" viewBox="0 0 24 24">
        <circle cx="12" cy="12" r="12" fill="#0f7ad1" />
        <path d="M0 11C1 4 6 0 12 0c7 0 12 5 12 10 0 4-3 6-6 6s-4-1-3-3 0-5-4-5C6 8 2 10 0 14z" fill="#3cc8a4" />
        <path d="M0 11C1 4 6 0 12 0c3 0 6 1 8 3C12 3 4 4 0 11z" fill="#38b6e8" />
        <path d="M9 11c-3 5 1 11 8 11 2 0 4-1 5-3-5 2-13 0-12-7z" fill="#0c4a94" />
        <path d="M10 11c2-2 5 0 4 3 0 3 5 4 8 2-4 4-13 3-12-5z" fill="#20363f" />
      </svg>
    ),
  },
  {
    name: '文件资源管理器',
    run: true,
    icon: (
      <svg width="22" height="19" viewBox="0 0 22 19">
        <path d="M0 0h9l2 2h11v17H0z" fill="#e5a50a" />
        <path d="M0 4h22v14H0z" fill="#ffd660" />
        <path d="M4 10h14v9h-3v-5H7v5H4z" fill="#3f92d8" />
      </svg>
    ),
  },
  {
    name: 'Microsoft Store',
    icon: (
      <svg width="24" height="24" viewBox="0 0 24 24">
        <path d="M6 6V2h12v4" fill="none" stroke="#1fa7e8" strokeWidth="2" />
        <path d="M0 5h24v16l-2 3H2l-2-3z" fill="#f3f3f3" />
        <path d="M7 9h4v4H7z" fill="#f25022" />
        <path d="M12.500 9h4v4h-4z" fill="#7fba00" />
        <path d="M7 14.500h4v4H7z" fill="#00a4ef" />
        <path d="M12.500 14.500h4v4h-4z" fill="#ffb900" />
      </svg>
    ),
  },
  { name: '猫', icon: <Cat /> },
  {
    name: 'Chrome',
    run: true,
    icon: (
      <svg width="24" height="24" viewBox="0 0 24 24">
        <circle cx="12" cy="12" r="12" fill="#34a853" />
        <path d="M12 12 1.600 6A12 12 0 0 1 22.400 6z" fill="#ea4335" />
        <path d="M12 6h10.400A12 12 0 0 1 12 24l5.200-9z" fill="#fbbc05" />
        <circle cx="12" cy="12" r="6" fill="#fff" />
        <circle cx="12" cy="12" r="4.600" fill="#4285f4" />
      </svg>
    ),
  },
  {
    name: '监视器',
    run: true,
    icon: (
      <svg width="24" height="22" viewBox="0 0 24 22">
        <path d="M0 6l8-4v14H0z" fill="#8f9396" />
        <path d="M6 0l18 1-1 15-17-2z" fill="#e2e4e6" />
        <path d="M8 2.500l14 .5-1 11-13-1.500z" fill="#fff" />
        <path d="M8 11l2-1 2-6 2 7 2-4 2 4 3-1" fill="none" stroke="#3f92d8" />
        <path d="M11 16l7 1v2l3 1c-2 3-10 3-12 0l2-1z" fill="#c9ccce" />
      </svg>
    ),
  },
  {
    name: 'PyCharm',
    run: true,
    icon: (
      <span className="grid size-[22px] place-items-center bg-linear-to-br from-[#21d789] from-20% to-[#fcf84a] to-50%">
        <span className="flex size-4 flex-col bg-black pl-0.5 text-[8px] leading-[9px] font-bold text-white">
          PC<span className="mt-1 h-px w-1.5 bg-white" />
        </span>
      </span>
    ),
  },
  { name: 'Excel', run: true, icon: <OfficeIcon letter="X" front="#107c41" shades={['#33c481', '#21a366', '#107c41', '#185c37']} /> },
  {
    name: '头像',
    run: true,
    icon: (
      <svg width="24" height="24" viewBox="0 0 24 24">
        <circle cx="12" cy="12" r="12" fill="#dfe7ee" />
        <path d="M5 22C0 18-1 9 3 4l3 3 2-3c2-1 5 0 5 2l2 3-2 1-1-1-1 4 1 3 1 7z" fill="#29445e" />
        <circle cx="10.500" cy="3.500" r="2" fill="#3b3330" />
      </svg>
    ),
  },
  { name: 'Word', run: true, active: true, icon: <OfficeIcon letter="W" front="#185abd" shades={['#41a5ee', '#2b7cd3', '#185abd', '#103f91']} /> },
]

function Taskbar() {
  return (
    <div className="relative flex h-10 shrink-0 items-stretch bg-linear-to-r from-[#20363f] via-[#1f3140] to-[#1b2542] text-white">
      <button aria-label="开始" className="grid w-12 place-items-center">
        <svg width="16" height="16" viewBox="0 0 16 16" fill="#fff"><path d="M0 2.200 6.500 1.300V7.500H0zM7.500 1.200 16 0v7.500H7.500zM0 8.500h6.500v6.200L0 13.800zM7.500 8.500H16V16l-8.500-1.200z" /></svg>
      </button>
      <label className="flex w-72 items-center gap-3 border border-[#c6c6c6] bg-[#f2f2f2] pl-[11px] text-sm text-[#222]">
        <Search size={17} />
        <input aria-label="任务栏搜索" placeholder="搜索" className="w-full bg-transparent outline-none placeholder:text-[#222]" />
      </label>
      <button aria-label="任务视图" className="grid w-[50px] place-items-center pr-0.5">
        <svg width="17" height="15" viewBox="0 0 17 15" fill="none" stroke="#fff"><path d="M.5 0v2.500h10V0M.5 15v-2.500h10V15M.5 4.500h10v6H.5zM14.500 0v4M14.500 8v7M13 4.500h3v3h-3z" /></svg>
      </button>
      {apps.map((app) => (
        <button key={app.name} aria-label={app.name} className={`relative grid w-[49px] place-items-center ${app.active ? 'bg-[#4e5d66]' : ''}`}>
          {app.icon}
          {app.run && <span className={`absolute bottom-0 h-0.5 bg-[#76b9ed] ${app.active ? 'w-full' : 'w-10'}`} />}
        </button>
      ))}
      <button aria-label="猫" className="relative ml-px grid w-12 place-items-center bg-[#a76a35]">
        <Cat />
        <span className="absolute bottom-0 h-0.5 w-full bg-[#ff7b0f]" />
      </button>

      <div className="ml-auto flex items-center">
        <span className="size-5 rounded-full bg-linear-to-br from-[#f8c23a] to-[#f0600c]" />
        <span className="ml-2.5 text-sm">30°C</span>
        <span className="ml-2 text-sm">晴朗</span>
        <svg width="12" height="7" viewBox="0 0 12 7" fill="none" stroke="#fff" strokeWidth="1.500" className="ml-6"><path d="M1 6l5-5 5 5" /></svg>
        <svg width="14" height="16" viewBox="0 0 14 16" className="ml-3">
          <path d="M3 6C3-2 11-2 11 6l2 5-2 1c0 3-8 3-8 0l-2-1z" fill="#111" />
          <ellipse cx="7" cy="11" rx="3.500" ry="4" fill="#fff" />
          <path d="M2.500 7c3 2 6 2 9 0v2c-3 2-6 2-9 0z" fill="#e0262b" />
          <ellipse cx="7" cy="5" rx="2.500" ry="1" fill="#f5a623" />
          <path d="M1 15h5M8 15h5" stroke="#f5a623" strokeWidth="2" />
          <circle cx="5.500" cy="3" r="1" fill="#fff" />
          <circle cx="8.500" cy="3" r="1" fill="#fff" />
        </svg>
        <svg width="16" height="12" viewBox="0 0 16 12" fill="none" stroke="#fff" className="ml-2.5"><path d="M3 .5h12.500v8H3zM7 11.500h5M9.500 8.500v3M.5 1v4h5v6" /></svg>
        <svg width="15" height="13" viewBox="0 0 15 13" fill="none" stroke="#fff" className="ml-2"><path d="M.5 4.500H3l3-3.500v11L3 8.500H.5zM8 4c1.500 1 1.500 4 0 5M10 2.500c2.500 2 2.500 6 0 8M12 1c3.500 3 3.500 8 0 11" /></svg>
        <span className="ml-2.5 text-sm">中</span>
        <span className="ml-2 w-[62px] text-center text-xs leading-5 whitespace-nowrap">20:27<br />2023/6/17</span>
        <svg width="17" height="15" viewBox="0 0 17 15" className="ml-[18px]"><path d="M0 0h17v12h-4v3l-4-3H0z" fill="#fff" /><path d="M3 3.500h11M3 6.500h11M3 9.500h7" stroke="#1b2542" /></svg>
        <div className="ml-5 h-10 w-1 border-l border-[#6b7285]" />
      </div>
      <span className="absolute right-[17px] bottom-1 grid size-[18px] place-items-center rounded-full bg-[#333c]">
        <svg width="8" height="8" viewBox="0 0 8 8" stroke="#fff" strokeWidth="1.500"><path d="M0 4h8M4 0v8" /></svg>
      </span>
      <span className="pointer-events-none absolute right-4 bottom-1 text-xl leading-8 whitespace-nowrap text-white/60 [text-shadow:1px_1px_1px_#0008]">CSDN @买女孩儿的大火柴</span>
    </div>
  )
}

export default function App() {
  return (
    <div className="flex h-screen flex-col overflow-hidden bg-[#f3f2f1] font-['Noto_Sans','Noto_Sans_CJK_SC',sans-serif]">
      <TitleBar />
      <Tabs />
      <Ribbon />
      <div className="flex min-h-0 flex-1">
        <Workspace />
        <FormatPane />
      </div>
      <StatusBar />
      <Taskbar />
    </div>
  )
}
